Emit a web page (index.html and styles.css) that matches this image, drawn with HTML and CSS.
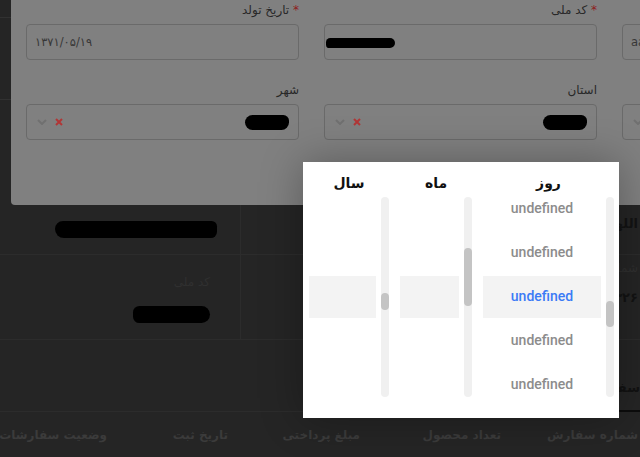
FILE: index.html
```html
<!DOCTYPE html>
<html lang="fa" dir="rtl">
<head>
  <meta charset="utf-8">
  <title>پروفایل کاربر</title>
  <link rel="stylesheet" href="styles.css">
</head>
<body>

  <!-- page behind the dialog -->
  <div class="page">
    <div class="page-top">
      <div class="rule rule-1"></div>
      <div class="rule rule-2"></div>
    </div>

    <div class="info">
      <div class="info-cell main top">
        <div class="info-title">اللهیار محمدی</div>
      </div>
      <div class="info-cell top">
        <span class="redact redact-wide"></span>
      </div>
      <div class="info-cell main bottom">
        <div class="info-label">شماره تماس</div>
        <div class="info-value">۰۹۱۲۴۵۳۲۶</div>
      </div>
      <div class="info-cell bottom side">
        <div class="info-label">کد ملی</div>
        <span class="redact redact-code"></span>
      </div>
    </div>

    <div class="tabs">
      <div class="tab active">سفارشات</div>
    </div>

    <div class="table-head">
      <div>شماره سفارش</div>
      <div>تعداد محصول</div>
      <div>مبلغ پرداختی</div>
      <div>تاریخ ثبت</div>
      <div>وضعیت سفارشات</div>
    </div>
  </div>

  <!-- edit dialog -->
  <div class="modal">
    <div class="form-grid">
      <div class="field">
        <label><span class="req">*</span> نام کاربری</label>
        <div class="input ltr">aaaaaa</div>
      </div>
      <div class="field">
        <label><span class="req">*</span> کد ملی</label>
        <div class="input ltr"><span class="redact redact-input"></span></div>
      </div>
      <div class="field">
        <label><span class="req">*</span> تاریخ تولد</label>
        <div class="input ltr">۱۳۷۱/۰۵/۱۹</div>
      </div>

      <div class="field">
        <label>کشور</label>
        <div class="select">
          <span class="select-value">ایران</span>
          <svg class="clear" width="8" height="8" viewBox="0 0 8 8"><path d="M1 1l6 6M7 1L1 7" stroke="#b13636" stroke-width="2"/></svg>
          <svg class="arrow" width="10" height="6" viewBox="0 0 10 6"><path d="M1 1l4 4 4-4" fill="none" stroke="#707070" stroke-width="2"/></svg>
        </div>
      </div>
      <div class="field">
        <label>استان</label>
        <div class="select">
          <span class="select-value"><span class="redact redact-select"></span></span>
          <svg class="clear" width="8" height="8" viewBox="0 0 8 8"><path d="M1 1l6 6M7 1L1 7" stroke="#b13636" stroke-width="2"/></svg>
          <svg class="arrow" width="10" height="6" viewBox="0 0 10 6"><path d="M1 1l4 4 4-4" fill="none" stroke="#707070" stroke-width="2"/></svg>
        </div>
      </div>
      <div class="field">
        <label>شهر</label>
        <div class="select">
          <span class="select-value"><span class="redact redact-select"></span></span>
          <svg class="clear" width="8" height="8" viewBox="0 0 8 8"><path d="M1 1l6 6M7 1L1 7" stroke="#b13636" stroke-width="2"/></svg>
          <svg class="arrow" width="10" height="6" viewBox="0 0 10 6"><path d="M1 1l4 4 4-4" fill="none" stroke="#707070" stroke-width="2"/></svg>
        </div>
      </div>
    </div>
  </div>

  <!-- date picker popup -->
  <div class="picker">
    <div class="wheel wheel-day">
      <div class="wheel-title">روز</div>
      <div class="wheel-body">
        <div class="wheel-list">
          <div class="wheel-highlight"></div>
          <div class="wheel-items">
            <div class="wheel-item">undefined</div>
            <div class="wheel-item">undefined</div>
            <div class="wheel-item selected">undefined</div>
            <div class="wheel-item">undefined</div>
            <div class="wheel-item">undefined</div>
          </div>
        </div>
        <div class="scroll-track"><div class="scroll-thumb" style="top: 104px; height: 26px;"></div></div>
      </div>
    </div>

    <div class="wheel wheel-month">
      <div class="wheel-title">ماه</div>
      <div class="wheel-body">
        <div class="wheel-list">
          <div class="wheel-highlight"></div>
        </div>
        <div class="scroll-track"><div class="scroll-thumb" style="top: 51px; height: 58px;"></div></div>
      </div>
    </div>

    <div class="wheel wheel-year">
      <div class="wheel-title">سال</div>
      <div class="wheel-body">
        <div class="wheel-list">
          <div class="wheel-highlight"></div>
        </div>
        <div class="scroll-track"><div class="scroll-thumb" style="top: 96px; height: 17px;"></div></div>
      </div>
    </div>
  </div>

</body>
</html>
```

FILE: styles.css
```css
html, body {
  margin: 0;
  padding: 0;
  overflow: hidden;
}

body {
  font-family: "DejaVu Sans", sans-serif;
  background-color: #252525;
  width: 640px;
  height: 457px;
  position: relative;
}

.redact {
  display: inline-block;
  background-color: #000;
  vertical-align: middle;
}

/* ---------- page behind ---------- */

.page {
  width: 640px;
}

.page-top {
  height: 205px;
}

.rule {
  border-bottom: 1px solid #313131;
}

.rule-1 {
  height: 17px;
}

.rule-2 {
  height: 81px;
}

.info {
  display: grid;
  grid-template-columns: 400px 240px;
  grid-template-rows: 50px 85px;
}

.info-cell {
  border-bottom: 1px solid #2c2c2c;
  box-sizing: border-box;
  white-space: nowrap;
}

.info-cell.main {
  border-left: 1px solid #2c2c2c;
  padding-right: 2px;
}

.info-cell.top {
  padding-top: 14px;
}

.info-cell.top .redact {
  margin-right: 23px;
}

.info-title {
  font-size: 13px;
  font-weight: bold;
  color: #131313;
  margin-top: -3px;
}

.info-cell.main.bottom {
  padding-top: 3px;
}

.info-label {
  font-size: 12px;
  color: #303030;
  line-height: 20px;
}

.info-value {
  font-size: 13px;
  font-weight: bold;
  color: #131313;
  margin-top: 12px;
}

.info-cell.side {
  padding: 17px 30px 0 0;
}

.redact-wide {
  width: 162px;
  height: 17px;
  border-radius: 9px 6px 7px 10px;
}

.redact-code {
  width: 77px;
  height: 17px;
  margin-top: 14px;
  border-radius: 9px 12px 12px 9px;
}

.tabs {
  height: 71px;
  border-bottom: 1px solid #2c2c2c;
  display: flex;
  align-items: flex-end;
}

.tab {
  font-size: 13px;
  font-weight: bold;
  color: #2e2e2e;
  line-height: 20px;
  padding-bottom: 12px;
  border-bottom: 2px solid transparent;
  margin-bottom: -1px;
}

.tab.active {
  color: #121212;
  border-bottom-color: #0c0c0c;
}

.table-head {
  display: grid;
  grid-template-columns: 137px 141px 132px 121px 109px;
  height: 45px;
  align-items: center;
  font-size: 12px;
  font-weight: bold;
  color: #3b3b3b;
  white-space: nowrap;
}

.table-head div {
  padding-right: 2px;
}

/* ---------- dialog ---------- */

.modal {
  position: absolute;
  top: 0;
  left: 11px;
  width: 869px;
  height: 203px;
  padding: 2px 15px 0 15px;
  background-color: #808080;
  border-radius: 0 0 4px 4px;
}

.form-grid {
  display: grid;
  grid-template-columns: repeat(3, 273px);
  column-gap: 25px;
  row-gap: 22px;
}

.field label {
  display: block;
  font-size: 12px;
  line-height: 16px;
  color: #282828;
  margin-bottom: 6px;
  white-space: nowrap;
}

.req {
  color: #8e1c1c;
}

.input,
.select {
  height: 36px;
  box-sizing: border-box;
  border: 1px solid #6a6a6a;
  border-radius: 4px;
}

.input {
  padding: 0 8px;
  line-height: 34px;
  font-size: 11.5px;
  color: #373737;
}

.input.ltr {
  direction: ltr;
  text-align: left;
}

.redact-input {
  width: 69px;
  height: 10px;
  margin-left: -7px;
  border-radius: 5px 6px 6px 4px;
}

.select {
  display: flex;
  align-items: center;
  gap: 8px;
  padding: 0 9px 0 10px;
  font-size: 12px;
  color: #2a2a2a;
}

.select-value {
  flex: 1;
}

.redact-select {
  width: 44px;
  height: 15px;
  border-radius: 8px 6px 8px 8px;
}

/* ---------- date picker ---------- */

.picker {
  position: absolute;
  left: 303px;
  top: 162px;
  width: 316px;
  height: 256px;
  box-sizing: border-box;
  padding: 10px 5px 21px 6px;
  background-color: #fff;
  display: flex;
  gap: 11px;
  box-shadow: 0 0 40px rgba(0, 0, 0, 0.3);
}

.wheel {
  display: flex;
  flex-direction: column;
}

.wheel-day {
  width: 131px;
}

.wheel-month {
  width: 72px;
}

.wheel-year {
  width: 80px;
}

.wheel-title {
  height: 25px;
  line-height: 23px;
  text-align: center;
  font-size: 14px;
  font-weight: bold;
  color: #111;
}

.wheel-body {
  direction: ltr;
  display: flex;
  gap: 5px;
  height: 200px;
}

.wheel-list {
  flex: 1;
  position: relative;
  overflow: hidden;
}

.wheel-highlight {
  position: absolute;
  top: 79px;
  left: 0;
  right: 0;
  height: 42px;
  background-color: #f3f3f3;
}

.wheel-items {
  position: relative;
  margin-top: -11px;
}

.wheel-item {
  height: 44px;
  line-height: 44px;
  text-align: center;
  font-family: Roboto, sans-serif;
  font-size: 14px;
  font-weight: 500;
  color: #8c8c8c;
}

.wheel-item.selected {
  color: #3b7bf6;
}

.scroll-track {
  width: 8px;
  position: relative;
  background-color: #f0f0f0;
  border-radius: 4px;
}

.scroll-thumb {
  position: absolute;
  left: 0;
  right: 0;
  background-color: #c4c4c4;
  border-radius: 4px;
}
```
